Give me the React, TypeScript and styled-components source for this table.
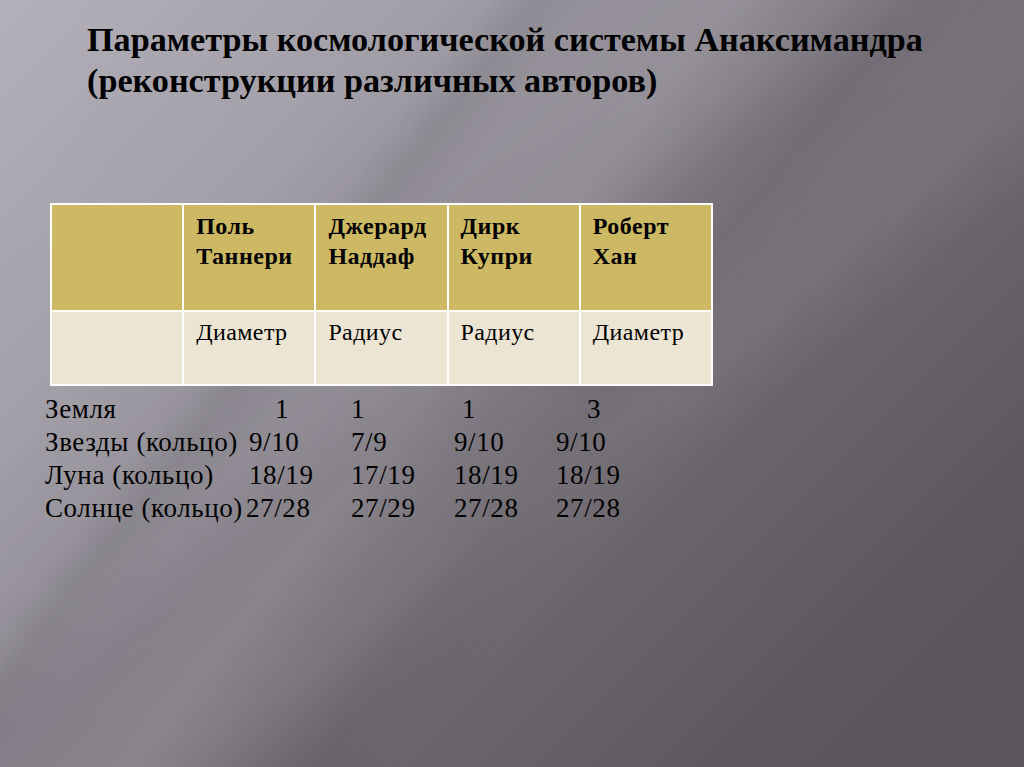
import React from "react";
import styled, { createGlobalStyle } from "styled-components";

const GlobalStyle = createGlobalStyle`
  html, body {
    margin: 0;
    padding: 0;
  }
  body {
    font-family: "Liberation Serif", "Times New Roman", serif;
    color: #000;
  }
`;

const Slide = styled.main`
  position: relative;
  width: 1024px;
  height: 767px;
  overflow: hidden;
  box-sizing: border-box;
  padding: 19px 0 0 0;
  background:
    linear-gradient(
      128deg,
      rgba(255, 255, 255, 0) 0%,
      rgba(255, 255, 255, 0) 30%,
      rgba(0, 0, 0, 0.08) 33%,
      rgba(255, 255, 255, 0) 37%,
      rgba(255, 255, 255, 0.07) 45%,
      rgba(255, 255, 255, 0) 50%,
      rgba(0, 0, 0, 0.06) 56%,
      rgba(255, 255, 255, 0) 62%
    ),
    linear-gradient(
      142deg,
      rgba(255, 255, 255, 0) 0%,
      rgba(255, 255, 255, 0.06) 42%,
      rgba(255, 255, 255, 0) 47%,
      rgba(255, 255, 255, 0.05) 58%,
      rgba(255, 255, 255, 0) 64%
    ),
    linear-gradient(135deg, #b4b0b9 0%, #a09ca5 24%, #817c84 45%, #6b666c 65%, #5c575d 85%, #5a555b 100%);
`;

const Title = styled.h1`
  margin: 0 0 0 87px;
  font-size: 34.2px;
  line-height: 41px;
  font-weight: bold;
  white-space: nowrap;
`;

const Table = styled.table`
  margin: 102px 0 0 50px;
  border-collapse: collapse;
  width: 663px;
  border: 2px solid #ffffff;
`;

const Cell = styled.td<{ $head?: boolean }>`
  width: 132px;
  box-sizing: border-box;
  border: 2px solid #ffffff;
  vertical-align: top;
  padding: ${(p) => (p.$head ? "6px 6px 0 12px" : "5px 6px 0 12px")};
  height: ${(p) => (p.$head ? "107px" : "74px")};
  background: ${(p) => (p.$head ? "#cdb963" : "#ece5d3")};
  font-size: 24px;
  font-weight: ${(p) => (p.$head ? "bold" : "normal")};
  letter-spacing: ${(p) => (p.$head ? "0.5px" : "0.4px")};
  line-height: 30px;
  white-space: nowrap;
`;

const Data = styled.div`
  margin: 7px 0 0 45px;
  display: grid;
  grid-template-columns: 205px 102px 103px 102px 103px;
  grid-auto-rows: 33px;
  font-size: 27px;
  line-height: 33px;
  letter-spacing: 0.6px;
  white-space: nowrap;
`;

const Label = styled.span`
  display: block;
`;

const Value = styled.span<{ $indent?: number }>`
  display: block;
  margin-left: ${(p) => p.$indent ?? 0}px;
`;

const authors = [
  ["Поль", "Таннери"],
  ["Джерард", "Наддаф"],
  ["Дирк", "Купри"],
  ["Роберт", "Хан"],
];

const measures = ["Диаметр", "Радиус", "Радиус", "Диаметр"];

const rows: { label: string; values: string[]; indents: number[] }[] = [
  { label: "Земля", values: ["1", "1", "1", "3"], indents: [25, -1, 7, 30] },
  { label: "Звезды (кольцо)", values: ["9/10", "7/9", "9/10", "9/10"], indents: [-1, -1, -1, -1] },
  { label: "Луна (кольцо)", values: ["18/19", "17/19", "18/19", "18/19"], indents: [-1, -1, -1, -1] },
  { label: "Солнце (кольцо)", values: ["27/28", "27/29", "27/28", "27/28"], indents: [-4, -1, -1, -1] },
];

export default function App() {
  return (
    <>
      <GlobalStyle />
      <Slide>
        <Title>
          Параметры космологической системы Анаксимандра
          <br />
          (реконструкции различных авторов)
        </Title>

        <Table>
          <tbody>
            <tr>
              <Cell $head />
              {authors.map(([first, last]) => (
                <Cell $head key={last}>
                  {first}
                  <br />
                  {last}
                </Cell>
              ))}
            </tr>
            <tr>
              <Cell />
              {measures.map((m, i) => (
                <Cell key={i}>{m}</Cell>
              ))}
            </tr>
          </tbody>
        </Table>

        <Data>
          {rows.map((r) => (
            <React.Fragment key={r.label}>
              <Label>{r.label}</Label>
              {r.values.map((v, i) => (
                <Value key={i} $indent={r.indents[i]}>
                  {v}
                </Value>
              ))}
            </React.Fragment>
          ))}
        </Data>
      </Slide>
    </>
  );
}
